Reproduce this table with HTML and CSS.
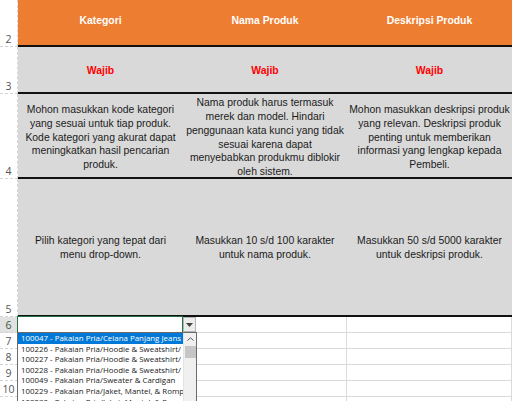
FILE: index.html
```html
<!DOCTYPE html>
<html lang="id">
<head>
<meta charset="utf-8">
<link rel="stylesheet" href="styles.css">
</head>
<body>
<div class="sheet">
  <div class="rh"><span>2</span></div>
  <div class="c head">Kategori</div>
  <div class="c head">Nama Produk</div>
  <div class="c head">Deskripsi Produk</div>

  <div class="rh"><span>3</span></div>
  <div class="c req">Wajib</div>
  <div class="c req">Wajib</div>
  <div class="c req">Wajib</div>

  <div class="rh"><span>4</span></div>
  <div class="c note">Mohon masukkan kode kategori<br>yang sesuai untuk tiap produk.<br>Kode kategori yang akurat dapat<br>meningkatkan hasil pencarian<br>produk.</div>
  <div class="c note">Nama produk harus termasuk<br>merek dan model. Hindari<br>penggunaan kata kunci yang tidak<br>sesuai karena dapat<br>menyebabkan produkmu diblokir<br>oleh sistem.</div>
  <div class="c note">Mohon masukkan deskripsi produk<br>yang relevan. Deskripsi produk<br>penting untuk memberikan<br>informasi yang lengkap kepada<br>Pembeli.</div>

  <div class="rh"><span>5</span></div>
  <div class="c tip">Pilih kategori yang tepat dari<br>menu drop-down.</div>
  <div class="c tip">Masukkan 10 s/d 100 karakter<br>untuk nama produk.</div>
  <div class="c tip">Masukkan 50 s/d 5000 karakter<br>untuk deskripsi produk.</div>

  <div class="rh sel"><span>6</span></div>
  <div class="c blank active">
    <div class="ddbtn"><svg width="7" height="4" viewBox="0 0 7 4"><path d="M0 0H7L3.5 4Z" fill="#444"/></svg></div>
    <div class="ddlist">
      <ul class="items">
        <li class="hl">100047 - Pakaian Pria/Celana Panjang Jeans</li>
        <li>100226 - Pakaian Pria/Hoodie &amp; Sweatshirt/</li>
        <li>100227 - Pakaian Pria/Hoodie &amp; Sweatshirt/</li>
        <li>100228 - Pakaian Pria/Hoodie &amp; Sweatshirt/</li>
        <li>100049 - Pakaian Pria/Sweater &amp; Cardigan</li>
        <li>100229 - Pakaian Pria/Jaket, Mantel, &amp; Rompi</li>
        <li>100230 - Pakaian Pria/Jaket, Mantel, &amp; Rompi</li>
      </ul>
      <div class="scroll">
        <svg class="up" width="7" height="4" viewBox="0 0 7 4"><path d="M0.5 3.5L3.5 0.8L6.5 3.5" fill="none" stroke="#555" stroke-width="1"/></svg>
        <div class="thumb"></div>
      </div>
    </div>
  </div>
  <div class="c blank"></div>
  <div class="c blank"></div>

  <div class="rh"><span>7</span></div>
  <div class="c blank"></div><div class="c blank"></div><div class="c blank"></div>
  <div class="rh"><span>8</span></div>
  <div class="c blank"></div><div class="c blank"></div><div class="c blank"></div>
  <div class="rh"><span>9</span></div>
  <div class="c blank"></div><div class="c blank"></div><div class="c blank"></div>
  <div class="rh"><span>10</span></div>
  <div class="c blank"></div><div class="c blank"></div><div class="c blank"></div>
  <div class="rh"></div>
  <div class="c blank"></div><div class="c blank"></div><div class="c blank"></div>
</div>
</body>
</html>
```

FILE: styles.css
```css
* { box-sizing: border-box; margin: 0; padding: 0; }
html, body { width: 512px; height: 401px; overflow: hidden; background: #fff; }
body { font-family: "Liberation Sans", Arial, sans-serif; }

.sheet {
  display: grid;
  grid-template-columns: 18px 165px 164px 165px;
  grid-template-rows: 47px 47px 85px 138px repeat(6, 16px);
  width: 512px;
}

.rh {
  display: flex;
  align-items: flex-end;
  justify-content: center;
  border-right: 1px dashed #d4d4d4;
  border-bottom: 1px dashed #d4d4d4;
  font-family: "Open Sans", "Noto Sans", sans-serif;
  font-size: 10.5px;
  line-height: 14px;
  color: #555;
}
.rh.sel { background: #e1e1e1; color: #2f5f3f; }

.c {
  display: flex;
  align-items: center;
  justify-content: center;
  text-align: center;
  font-size: 10.4px;
  white-space: nowrap;
}
.head {
  background: #ed7d31;
  color: #fff;
  font-weight: bold;
  border-bottom: 2px solid #111;
  padding-bottom: 5px;
}
.req {
  background: #d9d9d9;
  color: #ff0000;
  font-weight: bold;
  border-bottom: 2px solid #111;
  padding-top: 2px;
}
.note, .tip {
  background: #d9d9d9;
  color: #1b1b1b;
  line-height: 13.8px;
  border-bottom: 2px solid #111;
}
.note { padding-top: 4px; }
.tip { padding-top: 2px; }

.blank {
  border-bottom: 1px solid #dadada;
  border-right: 1px solid #dadada;
}

.active { position: relative; border-right: none; }
.active::before {
  content: "";
  position: absolute;
  left: -1px; top: -1px; right: 0; bottom: -1px;
  border: 1px solid #217346;
}
.ddbtn {
  position: absolute;
  left: 165px; top: 0;
  width: 13px; height: 15px;
  background: #ececec;
  border: 1px solid #b5b5b5;
  display: flex;
  align-items: center;
  justify-content: center;
  z-index: 2;
}
.ddlist {
  position: absolute;
  left: -1px; top: 15px;
  width: 180px;
  height: 90px;
  border: 1px solid #6b6b6b;
  background: #fff;
  display: flex;
  z-index: 3;
}
.items {
  list-style: none;
  width: 165px;
  overflow: hidden;
}
.items li {
  font-family: "Open Sans", "Noto Sans", sans-serif;
  font-size: 7.9px;
  line-height: 10.6px;
  height: 10.6px;
  color: #222;
  padding-left: 3px;
  white-space: nowrap;
  overflow: hidden;
  text-align: left;
}
.items li.hl { background: #0078d7; color: #fff; }
.scroll {
  width: 13px;
  background: #f0f0f0;
  border-left: 1px solid #e4e4e4;
  display: flex;
  flex-direction: column;
  align-items: center;
}
.scroll .up { margin-top: 4px; }
.thumb {
  margin-top: 5px;
  width: 11px;
  height: 12px;
  background: #c6c6c6;
}
```
